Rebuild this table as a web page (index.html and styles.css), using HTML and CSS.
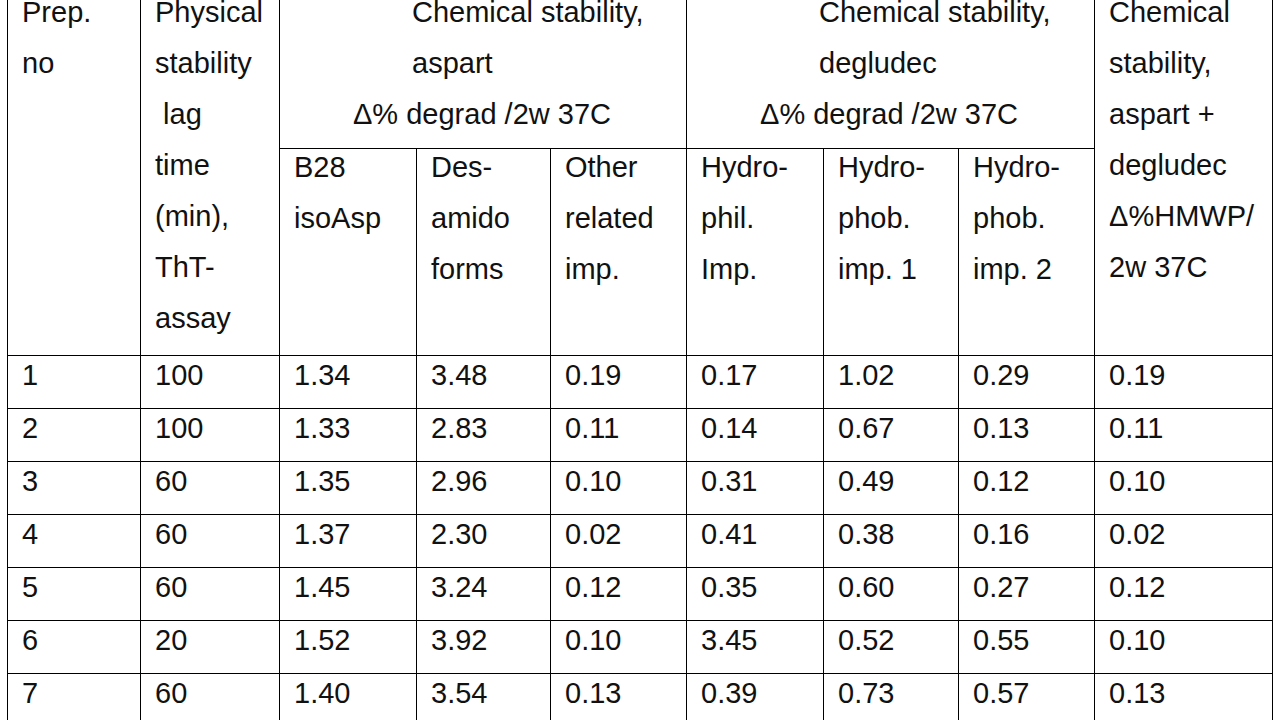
FILE: index.html
```html
<!DOCTYPE html>
<html lang="en">
<head>
    <meta charset="UTF-8">
    <meta name="viewport" content="width=device-width, initial-scale=1.0">
    <title>Stability of preparations</title>
    <link rel="stylesheet" href="styles.css">
</head>
<body>
    <table class="results">
        <colgroup>
            <col style="width: 133px">
            <col style="width: 139px">
            <col style="width: 137px">
            <col style="width: 134px">
            <col style="width: 136px">
            <col style="width: 137px">
            <col style="width: 135px">
            <col style="width: 136px">
            <col style="width: 178px">
        </colgroup>
        <thead>
            <tr class="top">
                <th rowspan="2" class="tall"><div class="lines">Prep.<br>no</div></th>
                <th rowspan="2" class="tall"><div class="lines">Physical<br>stability<br>&nbsp;lag<br>time<br>(min),<br>ThT-<br>assay</div></th>
                <th colspan="3"><div class="lines group"><span>Chemical stability,</span><span>aspart</span><span class="wide">&Delta;% degrad /2w 37C</span></div></th>
                <th colspan="3"><div class="lines group"><span>Chemical stability,</span><span>degludec</span><span class="wide">&Delta;% degrad /2w 37C</span></div></th>
                <th rowspan="2" class="tall"><div class="lines">Chemical<br>stability,<br>aspart +<br>degludec<br>&Delta;%HMWP/<br>2w 37C</div></th>
            </tr>
            <tr class="sub">
                <th><div class="lines">B28<br>isoAsp</div></th>
                <th><div class="lines">Des-<br>amido<br>forms</div></th>
                <th><div class="lines">Other<br>related<br>imp.</div></th>
                <th><div class="lines">Hydro-<br>phil.<br>Imp.</div></th>
                <th><div class="lines">Hydro-<br>phob.<br>imp. 1</div></th>
                <th><div class="lines">Hydro-<br>phob.<br>imp. 2</div></th>
            </tr>
        </thead>
        <tbody>
            <tr><td>1</td><td>100</td><td>1.34</td><td>3.48</td><td>0.19</td><td>0.17</td><td>1.02</td><td>0.29</td><td>0.19</td></tr>
            <tr><td>2</td><td>100</td><td>1.33</td><td>2.83</td><td>0.11</td><td>0.14</td><td>0.67</td><td>0.13</td><td>0.11</td></tr>
            <tr><td>3</td><td>60</td><td>1.35</td><td>2.96</td><td>0.10</td><td>0.31</td><td>0.49</td><td>0.12</td><td>0.10</td></tr>
            <tr><td>4</td><td>60</td><td>1.37</td><td>2.30</td><td>0.02</td><td>0.41</td><td>0.38</td><td>0.16</td><td>0.02</td></tr>
            <tr><td>5</td><td>60</td><td>1.45</td><td>3.24</td><td>0.12</td><td>0.35</td><td>0.60</td><td>0.27</td><td>0.12</td></tr>
            <tr><td>6</td><td>20</td><td>1.52</td><td>3.92</td><td>0.10</td><td>3.45</td><td>0.52</td><td>0.55</td><td>0.10</td></tr>
            <tr><td>7</td><td>60</td><td>1.40</td><td>3.54</td><td>0.13</td><td>0.39</td><td>0.73</td><td>0.57</td><td>0.13</td></tr>
        </tbody>
    </table>
</body>
</html>
```

FILE: styles.css
```css
body {
    margin: 0;
    background-color: #fff;
    color: #111;
    font-family: "Liberation Sans", Arial, sans-serif;
    font-size: 29px;
}
.results {
    width: 1266px;
    margin: -7px 0 0 7px;
    table-layout: fixed;
    border-collapse: collapse;
}
.results th,
.results td {
    border: 1px solid #000;
    padding: 0 10px 0 14px;
    text-align: left;
    vertical-align: top;
    font-weight: normal;
    white-space: nowrap;
}
.results th {
    line-height: 51px;
    padding-bottom: 0;
}
.results .top {
    height: 155px;
}
.results .sub {
    height: 207px;
}
.lines {
    margin-top: -7px;
}
.group span {
    display: block;
    padding-left: 118px;
}
.group span.wide {
    padding-left: 59px;
}
.results td {
    line-height: 38px;
    padding-bottom: 14px;
}
```
